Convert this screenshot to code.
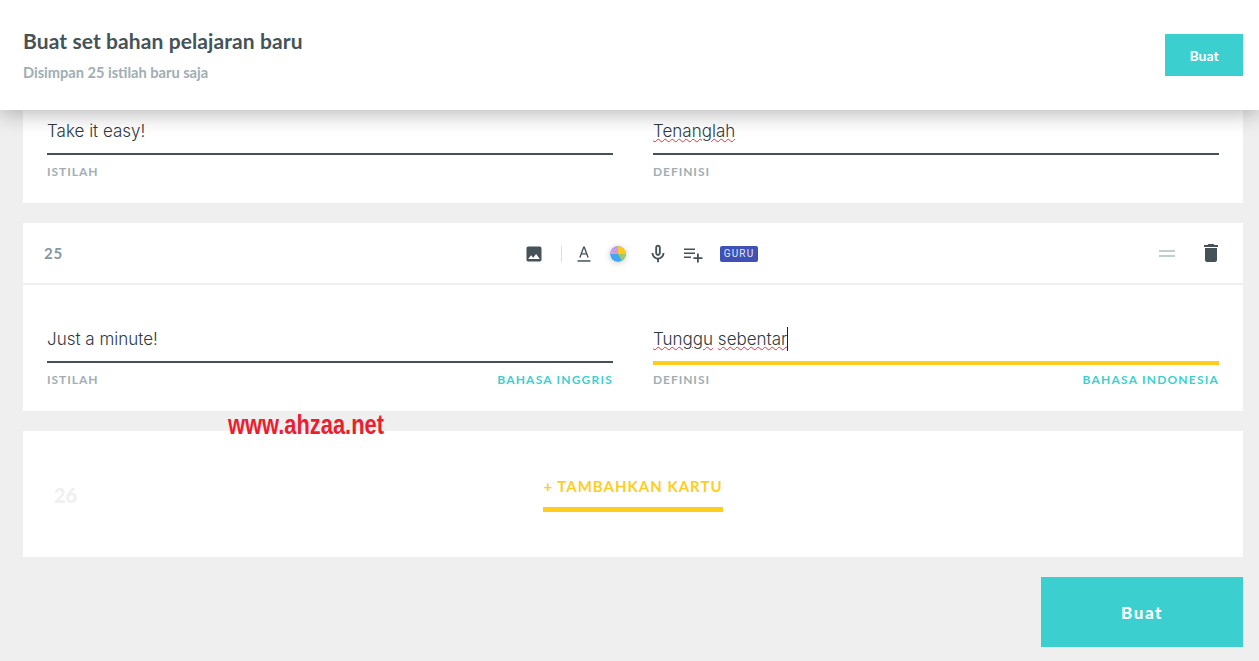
<div class="page">
  <header class="top">
    <div class="top-text">
      <h1>Buat set bahan pelajaran baru</h1>
      <p>Disimpan 25 istilah baru saja</p>
    </div>
    <button class="btn-small">Buat</button>
  </header>

  <main>
    <section class="card first">
      <div class="fields">
        <div class="field">
          <div class="value">Take it easy!</div>
          <div class="line"></div>
          <div class="labels"><span>ISTILAH</span></div>
        </div>
        <div class="field">
          <div class="value"><span class="spell">Tenanglah</span></div>
          <div class="line"></div>
          <div class="labels"><span>DEFINISI</span></div>
        </div>
      </div>
    </section>

    <section class="card">
      <div class="card-head">
        <span class="num">25</span>
        <div class="tools">
          <svg class="ic" width="20" height="20" viewBox="0 0 24 24"><path d="M21 19V5c0-1.100-.9-2-2-2H5c-1.100 0-2 .9-2 2v14c0 1.100.9 2 2 2h14c1.100 0 2-.9 2-2zM8.500 13.500l2.500 3.010L14.500 12l4.500 6H5l3.500-4.500z"/></svg>
          <span class="sep"></span>
          <svg class="ic" width="20" height="20" viewBox="0 0 20 20"><path d="M3.500 16.200h13v1.500h-13z"/><path d="M9.200 2.500h1.600l4 11h-1.500l-1-2.900H7.700l-1 2.900H5.200zM8.200 9.300h3.600L10 4.300z"/></svg>
          <span class="palette"><svg width="16" height="16" viewBox="0 0 16 16"><circle cx="8" cy="8" r="8" fill="#42a5f5"/><path d="M8 8V0a8 8 0 0 1 8 8z" fill="#fdc921"/><path d="M8 8h8a8 8 0 0 1-4 6.900z" fill="#9ccc65"/><path d="M8 8V0a8 8 0 0 0-7 4z" fill="#c79bf2"/><path d="M8 8L1 4a8 8 0 0 0-1 4z" fill="#ef9ac0"/></svg></span>
          <svg class="ic mic" width="22" height="22" viewBox="0 0 24 24"><path d="M12 14c1.660 0 3-1.340 3-3V5c0-1.660-1.340-3-3-3S9 3.340 9 5v6c0 1.660 1.340 3 3 3zm-1-9c0-.55.45-1 1-1s1 .45 1 1v6c0 .55-.45 1-1 1s-1-.45-1-1V5zm6 6c0 2.760-2.240 5-5 5s-5-2.240-5-5H5c0 3.530 2.610 6.430 6 6.920V21h2v-3.080c3.390-.49 6-3.390 6-6.920h-2z"/></svg>
          <svg class="ic list" width="20" height="20" viewBox="0 0 20 20"><path d="M1 4.500h11v1.600H1zM1 8.500h11v1.600H1zM1 12.500h7v1.600H1zM14 9.500h1.800v3.700h3.700v1.700h-3.700v3.600H14v-3.600h-3.600v-1.700H14z"/></svg>
          <span class="guru">GURU</span>
        </div>
        <div class="actions">
          <span class="drag"></span>
          <svg class="ic trash" width="24" height="24" viewBox="0 0 24 24"><path d="M6 19c0 1.100.9 2 2 2h8c1.100 0 2-.9 2-2V7H6v12zM19 4h-3.500l-1-1h-5l-1 1H5v2h14V4z"/></svg>
        </div>
      </div>
      <div class="fields body">
        <div class="field">
          <div class="value">Just a minute!</div>
          <div class="line"></div>
          <div class="labels"><span>ISTILAH</span><span class="lang">BAHASA INGGRIS</span></div>
        </div>
        <div class="field">
          <div class="value"><span class="spell">Tunggu</span> <span class="spell">sebentar</span><span class="caret"></span></div>
          <div class="line active"></div>
          <div class="labels"><span>DEFINISI</span><span class="lang">BAHASA INDONESIA</span></div>
        </div>
      </div>
    </section>

    <section class="card add">
      <span class="ghost">26</span>
      <span class="add-link">+ TAMBAHKAN KARTU</span>
    </section>

    <div class="bottom">
      <button class="btn-big">Buat</button>
    </div>
  </main>

  <div class="mark">www.ahzaa.net</div>
</div>

<style>
  :global(body) {
    margin: 0;
    background: #efefef;
    overflow: hidden;
  }
  .page {
    position: relative;
    width: 1259px;
    height: 661px;
    overflow: hidden;
    background: #efefef;
    font-family: Lato, "Liberation Sans", sans-serif;
    color: #455358;
  }
  .top {
    position: absolute;
    z-index: 2;
    top: 0;
    left: 0;
    right: 0;
    height: 110px;
    box-sizing: border-box;
    padding: 0 16px 0 23px;
    display: flex;
    align-items: center;
    justify-content: space-between;
    background: #fff;
    box-shadow: 0 2px 22px rgba(0, 0, 0, 0.32);
  }
  h1 {
    margin: 0 0 10px;
    font-size: 21px;
    line-height: 26px;
    font-weight: 700;
    letter-spacing: 0.1px;
    color: #455358;
  }
  .top p {
    margin: 0;
    font-size: 14.600px;
    line-height: 18px;
    font-weight: 700;
    color: #a0aeb4;
  }
  .btn-small {
    width: 78px;
    height: 42px;
    border: 0;
    background: #3ccfcf;
    color: #fff;
    font: 700 14px Lato, sans-serif;
  }
  main {
    display: flex;
    flex-direction: column;
    gap: 20px;
    padding: 86px 16px 0 23px;
  }
  .card {
    background: #fff;
  }
  .fields {
    display: grid;
    grid-template-columns: 1fr 1fr;
    gap: 40px;
    padding: 33px 24px 23px;
  }
  .fields.body {
    padding-top: 42px;
    padding-bottom: 23px;
  }
  .value {
    height: 24px;
    font-family: Inter, Lato, sans-serif;
    font-size: 17px;
    line-height: 24px;
    font-weight: 300;
    color: #2f3a3e;
  }
  .spell {
    text-decoration: underline wavy #e8333f 1px;
    text-underline-offset: 1px;
  }
  .caret {
    display: inline-block;
    width: 1px;
    height: 24px;
    background: #222;
    vertical-align: -6px;
  }
  .line {
    height: 2px;
    margin-top: 10px;
    background: #455358;
  }
  .line.active {
    height: 4px;
    margin-bottom: -2px;
    background: #ffcd1f;
  }
  .labels {
    display: flex;
    justify-content: space-between;
    margin-top: 9px;
    font-size: 12px;
    line-height: 16px;
    font-weight: 700;
    letter-spacing: 0.95px;
    color: #a0aeb4;
  }
  .lang {
    color: #3ccfcf;
    letter-spacing: 1.2px;
  }
  .card-head {
    position: relative;
    height: 60px;
    display: flex;
    align-items: center;
    justify-content: space-between;
    padding: 0 21px;
    border-bottom: 2px solid #efefef;
  }
  .num {
    font-size: 15px;
    font-weight: 700;
    letter-spacing: 0.8px;
    color: #8597a1;
  }
  .tools {
    position: absolute;
    left: 501px;
    top: 20px;
    display: flex;
    align-items: center;
    height: 22px;
  }
  .ic {
    fill: #455358;
    display: block;
  }
  .sep {
    width: 1px;
    height: 16px;
    margin: 0 12px 0 17px;
    background: #dcdfe0;
  }
  .palette {
    width: 16px;
    height: 16px;
    margin-left: 16px;
    border-radius: 50%;
    box-shadow: 0 1px 6px rgba(0, 0, 0, 0.22);
    display: block;
  }
  .palette svg {
    display: block;
    border-radius: 50%;
  }
  .mic {
    margin-left: 21px;
  }
  .list {
    margin-left: 14px;
  }
  .guru {
    margin-left: 17px;
    width: 38px;
    height: 16px;
    box-sizing: border-box;
    border-radius: 2px;
    background: #3f51b5;
    color: #e4e8fa;
    font: 400 10px/16px Roboto, sans-serif;
    letter-spacing: 1.2px;
    text-align: center;
  }
  .actions {
    display: flex;
    align-items: center;
    gap: 24px;
    margin-right: -1px;
  }
  .drag {
    width: 16px;
    height: 3px;
    border-top: 2px solid #c3ccd2;
    border-bottom: 2px solid #c3ccd2;
  }
  .add {
    position: relative;
    height: 126px;
    display: flex;
    flex-direction: column;
    align-items: center;
  }
  .ghost {
    position: absolute;
    left: 31px;
    top: 52px;
    font-size: 20px;
    line-height: 24px;
    font-weight: 900;
    color: #eff0f1;
  }
  .add-link {
    margin-top: 45px;
    padding-bottom: 11px;
    border-bottom: 5px solid #ffcd1f;
    font-size: 15px;
    line-height: 20px;
    font-weight: 700;
    letter-spacing: 1px;
    color: #ffcd1f;
  }
  .bottom {
    display: flex;
    justify-content: flex-end;
  }
  .btn-big {
    width: 202px;
    height: 70px;
    border: 0;
    background: #3ccfcf;
    color: #fff;
    font: 900 17px Lato, sans-serif;
    letter-spacing: 1.5px;
  }
  .mark {
    position: absolute;
    z-index: 3;
    left: 228px;
    top: 408px;
    font-family: "Liberation Sans", sans-serif;
    font-size: 27px;
    line-height: 34px;
    font-weight: 700;
    color: #ed1c2e;
    white-space: nowrap;
    transform: scaleX(0.81);
    transform-origin: left center;
  }
</style>
